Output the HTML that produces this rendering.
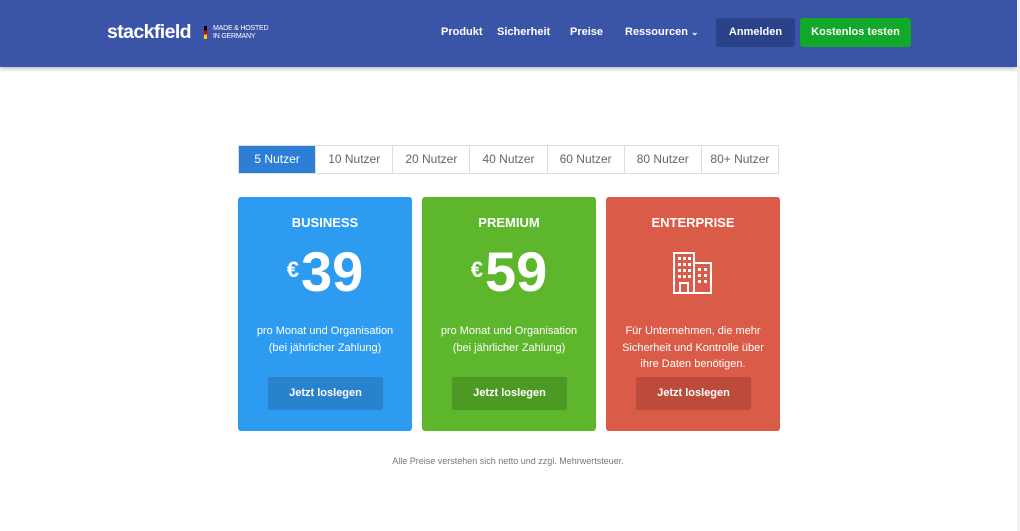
<!DOCTYPE html>
<html><head><meta charset="utf-8"><style>
*{box-sizing:border-box;margin:0;padding:0}
body{width:1020px;height:531px;background:#fff;font-family:"Liberation Sans",sans-serif;position:relative;overflow:hidden}
.hdr{position:absolute;left:0;top:0;width:1017px;height:67px;background:#3a55a8;box-shadow:0 2px 4px rgba(0,0,0,.25)}
.sb{position:absolute;right:0;top:0;width:3px;height:531px;background:#f0f0f0}
.logo{position:absolute;left:107px;top:21px;color:#fff;font-weight:bold;font-size:19.5px;letter-spacing:-0.6px}
.flag{position:absolute;left:204px;top:26px;width:3px;height:13px;background:linear-gradient(#000 33%,#d00 33%,#d00 66%,#fc0 66%)}
.mh{position:absolute;left:213px;top:25px;color:#fff;font-size:7px;line-height:8px;letter-spacing:-0.2px}
.nav{position:absolute;top:26px;color:#fff;font-weight:bold;font-size:11px}
.btn{position:absolute;top:18px;height:29px;border-radius:3px;color:#fff;font-weight:bold;font-size:11px;text-align:center;line-height:29px}
.tabs{position:absolute;left:238px;top:145px;width:541px;height:29px;border:1px solid #ddd;display:flex}
.tabs div{flex:1;border-left:1px solid #ddd;text-align:center;line-height:27px;font-size:12px;color:#666}
.tabs div:first-child{border-left:none;background:#2d7fd6;color:#fff}
.card{position:absolute;top:197px;width:174px;height:234px;border-radius:3px;color:#fff;text-align:center}
.t{position:absolute;top:18px;width:100%;font-weight:bold;font-size:13px}
.p{position:absolute;top:42px;width:100%;font-weight:bold;font-size:56px}
.p span{font-size:22px;vertical-align:14px;margin-right:2px}
.d{position:absolute;top:126px;width:100%;font-size:11px;line-height:16.5px}
.b{position:absolute;left:30px;top:180px;width:115px;height:33px;line-height:33px;font-weight:bold;font-size:11px;border-radius:2px}
.note{position:absolute;top:456px;width:1020px;left:-2px;text-align:center;font-size:9px;color:#777}
</style></head><body>
<div class="hdr">
<div class="logo">stackfield</div>
<div class="flag"></div>
<div class="mh">MADE &amp; HOSTED<br>IN GERMANY</div>
<div class="nav" style="left:441px">Produkt</div>
<div class="nav" style="left:497px">Sicherheit</div>
<div class="nav" style="left:570px">Preise</div>
<div class="nav" style="left:625px">Ressourcen <span style="font-size:9px">&#8964;</span></div>
<div class="btn" style="left:716px;width:79px;background:#2a4288">Anmelden</div>
<div class="btn" style="left:800px;width:111px;background:#12a82a">Kostenlos testen</div>
</div>
<div class="sb"></div>
<div class="tabs"><div>5 Nutzer</div><div>10 Nutzer</div><div>20 Nutzer</div><div>40 Nutzer</div><div>60 Nutzer</div><div>80 Nutzer</div><div>80+ Nutzer</div></div>
<div class="card" style="left:238px;background:#2d9bf0"><div class="t">BUSINESS</div><div class="p"><span>€</span>39</div><div class="d">pro Monat und Organisation<br>(bei jährlicher Zahlung)</div><div class="b" style="background:#2882cc">Jetzt loslegen</div></div>
<div class="card" style="left:422px;background:#5db62b"><div class="t">PREMIUM</div><div class="p"><span>€</span>59</div><div class="d">pro Monat und Organisation<br>(bei jährlicher Zahlung)</div><div class="b" style="background:#4c9a23">Jetzt loslegen</div></div>
<div class="card" style="left:606px;background:#d95b48"><div class="t">ENTERPRISE</div>
<svg style="position:absolute;left:66px;top:54px" width="42" height="44" viewBox="0 0 42 44" fill="none" stroke="#fff" stroke-width="2"><rect x="2" y="2" width="20" height="40"/><rect x="22" y="12" width="17" height="30"/><rect x="8" y="32" width="8" height="10"/><g fill="#fff" stroke="none"><rect x="6" y="6" width="3" height="3"/><rect x="11" y="6" width="3" height="3"/><rect x="16" y="6" width="3" height="3"/><rect x="6" y="12" width="3" height="3"/><rect x="11" y="12" width="3" height="3"/><rect x="16" y="12" width="3" height="3"/><rect x="6" y="18" width="3" height="3"/><rect x="11" y="18" width="3" height="3"/><rect x="16" y="18" width="3" height="3"/><rect x="6" y="24" width="3" height="3"/><rect x="11" y="24" width="3" height="3"/><rect x="16" y="24" width="3" height="3"/><rect x="26" y="17" width="3" height="3"/><rect x="32" y="17" width="3" height="3"/><rect x="26" y="23" width="3" height="3"/><rect x="32" y="23" width="3" height="3"/><rect x="26" y="29" width="3" height="3"/><rect x="32" y="29" width="3" height="3"/></g></svg>
<div class="d">Für Unternehmen, die mehr<br>Sicherheit und Kontrolle über<br>ihre Daten benötigen.</div><div class="b" style="background:#bd4b3b">Jetzt loslegen</div></div>
<div class="note">Alle Preise verstehen sich netto und zzgl. Mehrwertsteuer.</div>
</body></html>
